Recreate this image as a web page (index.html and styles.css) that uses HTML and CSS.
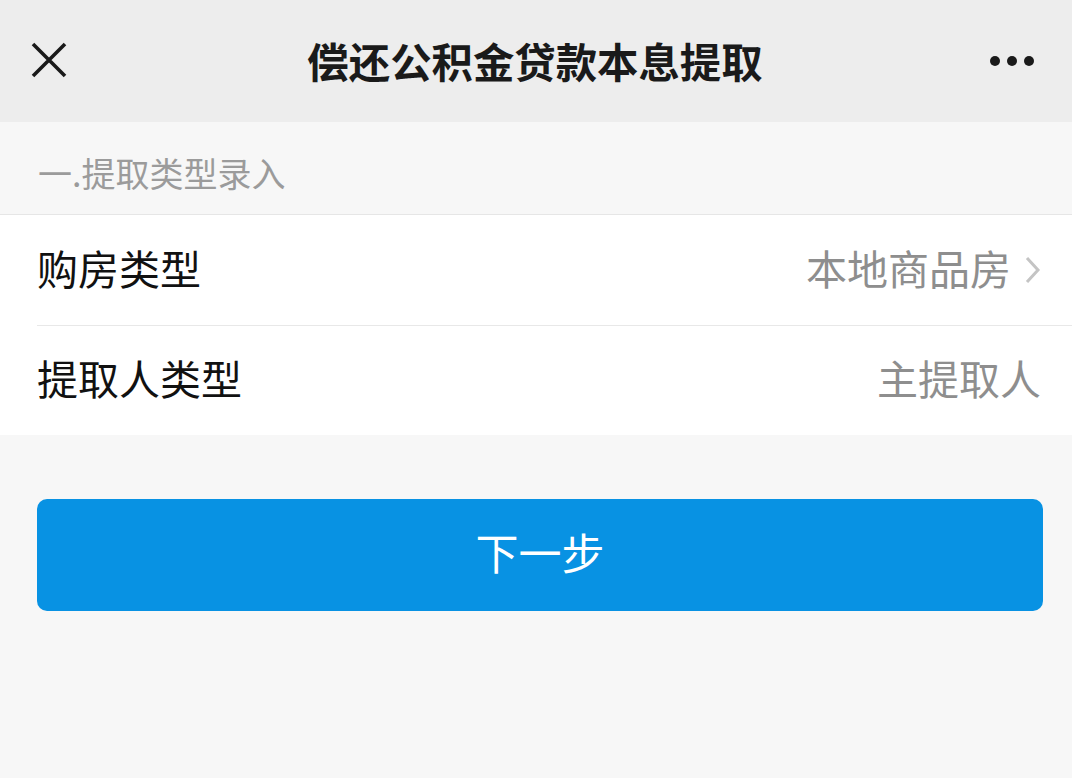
FILE: index.html
```html
<!DOCTYPE html>
<html lang="zh-CN">
<head>
    <meta charset="UTF-8">
    <meta name="viewport" content="width=device-width, initial-scale=1.0">
    <title>偿还公积金贷款本息提取</title>
    <link rel="stylesheet" href="styles.css">
</head>
<body>
    <div class="header">
        <svg class="close-icon" width="36" height="36" viewBox="0 0 36 36">
            <path d="M2 2 L34 34 M34 2 L2 34" stroke="#1a1a1a" stroke-width="3.6" fill="none"/>
        </svg>
        <h3>偿还公积金贷款本息提取</h3>
        <div class="more">
            <span></span><span></span><span></span>
        </div>
    </div>

    <!-- 提取类型 -->
    <div class="section-title">一.提取类型录入</div>

    <div class="form-list">
        <div class="form-row">
            <span class="label">购房类型</span>
            <span class="value">本地商品房
                <svg class="arrow" width="16" height="28" viewBox="0 0 16 28">
                    <path d="M2 2 L13 14 L2 26" stroke="#c4c4c4" stroke-width="3" fill="none"/>
                </svg>
            </span>
        </div>
        <div class="form-row">
            <span class="label">提取人类型</span>
            <span class="value">主提取人</span>
        </div>
    </div>

    <div class="btn-wrap">
        <button class="next-btn">下一步</button>
    </div>
</body>
</html>
```

FILE: styles.css
```css
body {
    background-color: #f7f7f7;
    margin: 0;
    font-family: "Noto Sans CJK SC", "Noto Sans", sans-serif;
}

.header {
    background-color: #ededed;
    height: 122px;
    display: flex;
    align-items: center;
    justify-content: space-between;
    padding: 0 38px 0 31px;
    box-sizing: border-box;
}

.close-icon {
    display: block;
    margin-top: -2px;
}

.header h3 {
    margin: 0 0 0 14px;
    font-size: 41.4px;
    font-weight: bold;
    color: #1a1a1a;
    line-height: 1;
}

.more {
    display: flex;
    gap: 7px;
    width: 45px;
    justify-content: flex-end;
}

.more span {
    width: 10px;
    height: 10px;
    border-radius: 50%;
    background-color: #1a1a1a;
}

.section-title {
    height: 84px;
    padding: 8px 0 0 38px;
    display: flex;
    align-items: center;
    font-size: 34px;
    color: #9b9b9b;
    border-bottom: 1px solid #e6e6e6;
}

.form-list {
    background-color: #fff;
}

.form-row {
    height: 103px;
    margin-left: 37px;
    padding: 0 31px 7px 0;
    display: flex;
    align-items: center;
    justify-content: space-between;
    border-bottom: 1px solid #e8e8e8;
}

.form-row:last-child {
    height: 102px;
    border-bottom: none;
}

.form-row .label {
    font-size: 41px;
    color: #111;
}

.form-row .value {
    font-size: 41px;
    color: #8e8e8e;
    display: flex;
    align-items: center;
}

.form-row .arrow {
    margin-left: 14px;
    margin-top: 6px;
}

.btn-wrap {
    padding: 64px 29px 0 37px;
}

.next-btn {
    width: 100%;
    height: 112px;
    border: none;
    border-radius: 10px;
    background-color: #0892e3;
    color: #fff;
    font-family: "Noto Sans CJK SC", "Noto Sans", sans-serif;
    font-size: 43px;
    padding: 0 0 8px 0;
}
```
